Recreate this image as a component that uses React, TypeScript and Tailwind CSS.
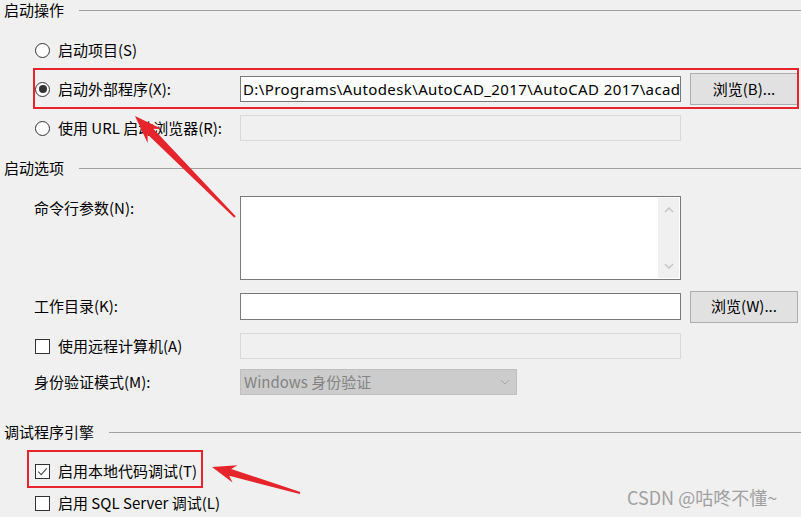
import type { ReactNode } from 'react';

const font = "font-['Noto_Sans_CJK_SC','Noto_Sans',sans-serif]";

function SectionHeader({ title }: { title: string }) {
  return (
    <div className="flex items-center h-[20px]">
      <span className="pl-[4px] text-[15px] leading-[20px] text-black whitespace-nowrap">{title}</span>
      <div className="flex-1 h-px bg-[#a0a0a0] ml-[15px]" />
    </div>
  );
}

function Radio({ checked }: { checked?: boolean }) {
  return (
    <span className="w-[15px] h-[15px] shrink-0 rounded-full border border-[#333] bg-white flex items-center justify-center">
      {checked && <span className="w-[8px] h-[8px] rounded-full bg-[#333]" />}
    </span>
  );
}

function Checkbox({ checked }: { checked?: boolean }) {
  return (
    <span className="w-[15px] h-[15px] shrink-0 border border-[#333] bg-white flex items-center justify-center">
      {checked && (
        <svg width="13" height="13" viewBox="0 0 13 13">
          <path d="M2.2 6.6 L5.2 9.6 L10.8 3.4" fill="none" stroke="#555" strokeWidth="1.2" />
        </svg>
      )}
    </span>
  );
}

function Button({ children }: { children: ReactNode }) {
  return (
    <button className="ml-[9px] w-[108px] h-[32px] bg-[#e1e1e1] border border-[#adadad] text-[15px] text-black flex items-center justify-center">
      {children}
    </button>
  );
}

function TextBox({ value, disabled }: { value?: string; disabled?: boolean }) {
  return (
    <div
      className={
        disabled
          ? 'w-[441px] h-[26px] bg-[#f0f0f0] border border-[#d9d9d9]'
          : "w-[441px] h-[26px] bg-white border border-[#7a7a7a] overflow-hidden whitespace-nowrap text-[15px] leading-[24px] pl-[2px] tracking-[0.4px] font-['Noto_Sans','Noto_Sans_CJK_SC',sans-serif]"
      }
    >
      {value}
    </div>
  );
}

function Chevron({ up }: { up?: boolean }) {
  return (
    <svg width="10" height="6" viewBox="0 0 10 6">
      <path d={up ? 'M1 5 L5 1 L9 5' : 'M1 1 L5 5 L9 1'} fill="none" stroke="#c2c2c2" strokeWidth="1.3" />
    </svg>
  );
}

export default function App() {
  return (
    <div className={`relative w-[801px] h-[517px] bg-[#f0f0f0] overflow-hidden text-black ${font}`}>
      <div className="flex flex-col">
        <SectionHeader title="启动操作" />

        <div className="mt-[20px] h-[20px] flex items-center pl-[35px] gap-[8px]">
          <Radio />
          <span className="text-[15px]">启动项目(S)</span>
        </div>

        <div className="mt-[13px] h-[32px] flex items-center">
          <div className="w-[240px] pl-[35px] flex items-center gap-[8px]">
            <Radio checked />
            <span className="text-[15px]">启动外部程序(X):</span>
          </div>
          <TextBox value="D:\Programs\Autodesk\AutoCAD_2017\AutoCAD 2017\acad" />
          <Button>浏览(B)...</Button>
        </div>

        <div className="mt-[10px] h-[26px] flex items-center">
          <div className="w-[240px] pl-[35px] flex items-center gap-[8px]">
            <Radio />
            <span className="text-[15px] whitespace-nowrap">使用 URL 启动浏览器(R):</span>
          </div>
          <TextBox disabled />
        </div>

        <div className="mt-[17px]">
          <SectionHeader title="启动选项" />
        </div>

        <div className="mt-[18px] flex items-start">
          <div className="w-[240px] pl-[34px] pt-[2px] text-[15px] leading-[20px]">命令行参数(N):</div>
          <div className="w-[441px] h-[84px] bg-white border border-[#7a7a7a] flex justify-end p-px">
            <div className="w-[21px] h-full bg-[#f0f0f0] flex flex-col items-center justify-between py-[9px]">
              <Chevron up />
              <Chevron />
            </div>
          </div>
        </div>

        <div className="mt-[10px] h-[33px] flex items-center">
          <div className="w-[240px] pl-[34px] text-[15px]">工作目录(K):</div>
          <div className="w-[441px] h-[27px] bg-white border border-[#7a7a7a]" />
          <Button>浏览(W)...</Button>
        </div>

        <div className="mt-[10px] h-[26px] flex items-center">
          <div className="w-[240px] pl-[35px] flex items-center gap-[8px]">
            <Checkbox />
            <span className="text-[15px]">使用远程计算机(A)</span>
          </div>
          <TextBox disabled />
        </div>

        <div className="mt-[10px] h-[26px] flex items-center">
          <div className="w-[240px] pl-[34px] text-[15px]">身份验证模式(M):</div>
          <div className="w-[277px] h-[26px] bg-[#cccccc] border border-[#bfbfbf] flex items-center justify-between pl-[3px] pr-[6px]">
            <span className="text-[15px] text-[#838383]">Windows 身份验证</span>
            <svg width="10" height="6" viewBox="0 0 10 6">
              <path d="M1 1 L5 5 L9 1" fill="none" stroke="#a8a8a8" strokeWidth="1" />
            </svg>
          </div>
        </div>

        <div className="mt-[27px]">
          <SectionHeader title="调试程序引擎" />
        </div>

        <div className="mt-[19px] h-[20px] flex items-center pl-[35px] gap-[8px]">
          <Checkbox checked />
          <span className="text-[15px]">启用本地代码调试(T)</span>
        </div>

        <div className="mt-[12px] h-[20px] flex items-center pl-[35px] gap-[8px]">
          <Checkbox />
          <span className="text-[15px]">启用 SQL Server 调试(L)</span>
        </div>
      </div>

      {/* annotations */}
      <div className="absolute left-[33px] top-[68px] w-[766px] h-[41px] border-2 border-[#e5242b]" />
      <div className="absolute left-[27px] top-[450px] w-[176px] h-[38px] border-2 border-[#e5242b]" />
      <svg className="absolute left-0 top-0" width="801" height="517" viewBox="0 0 801 517">
        <polygon
          points="135,116 147.6,142.9 147.7,134.4 234.3,217.7 235.7,216.3 153.3,128.8 161.8,128.9"
          fill="#e5242b"
        />
        <polygon
          points="212,467 232.5,482.4 229.2,475.8 299.7,494 300.3,492 231.2,469 237.5,465.2"
          fill="#e5242b"
        />
      </svg>

      <div className="absolute left-[627px] top-[484px] text-[18px] leading-[26px] text-[#a0a0a0] whitespace-nowrap">
        CSDN @咕咚不懂~
      </div>
    </div>
  );
}
